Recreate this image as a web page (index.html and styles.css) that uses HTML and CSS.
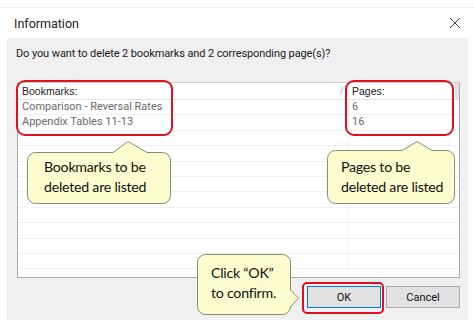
FILE: index.html
```html
<!DOCTYPE html>
<html>
<head>
<meta charset="utf-8">
<link rel="stylesheet" href="styles.css">
</head>
<body>
<div class="stage">
  <div class="topline"></div>
  <div class="titlebar">
    <span class="title">Information</span>
    <svg class="close" width="12" height="12" viewBox="0 0 12 12"><path d="M1 1 L11 11 M11 1 L1 11" stroke="#444" stroke-width="1" fill="none"/></svg>
  </div>
  <div class="content">
    <p class="question">Do you want to delete 2 bookmarks and 2 corresponding page(s)?</p>
    <div class="listbox">
      <div class="row header">
        <div class="cell c1">Bookmarks:<span class="grip">/</span></div>
        <div class="cell c2">Pages:</div>
        <div class="endbar"></div>
      </div>
      <div class="row"><div class="cell c1">Comparison - Reversal Rates</div><div class="cell c2">6</div></div>
      <div class="row"><div class="cell c1">Appendix Tables 11-13</div><div class="cell c2">16</div></div>
      <div class="row"><div class="cell c1"></div><div class="cell c2"></div></div>
      <div class="row"><div class="cell c1"></div><div class="cell c2"></div></div>
      <div class="row"><div class="cell c1"></div><div class="cell c2"></div></div>
      <div class="row"><div class="cell c1"></div><div class="cell c2"></div></div>
      <div class="row"><div class="cell c1"></div><div class="cell c2"></div></div>
      <div class="row"><div class="cell c1"></div><div class="cell c2"></div></div>
      <div class="row"><div class="cell c1"></div><div class="cell c2"></div></div>
      <div class="row"><div class="cell c1"></div><div class="cell c2"></div></div>
      <div class="row"><div class="cell c1"></div><div class="cell c2"></div></div>
    </div>
    <div class="buttons">
      <button class="btn btn-ok">OK</button>
      <button class="btn">Cancel</button>
    </div>
  </div>

  <div class="mark mark-bookmarks"></div>
  <div class="mark mark-pages"></div>
  <div class="mark mark-ok"></div>

  <div class="callout callout-bookmarks">
    <svg class="bubble" width="146" height="64" viewBox="0 0 146 64"><path d="M8.5 11.5 H86 L101 0.5 L120 11.5 H135.5 A8 8 0 0 1 143.5 19.5 V54.5 A8 8 0 0 1 135.5 62.5 H8.5 A8 8 0 0 1 0.5 54.5 V19.5 A8 8 0 0 1 8.5 11.5 Z" fill="#fdfccf" stroke="#8a8a78" stroke-width="1"/></svg>
    <div class="ctext">Bookmarks to be<br>deleted are listed</div>
  </div>
  <div class="callout callout-pages">
    <svg class="bubble" width="130" height="64" viewBox="0 0 130 64"><path d="M8.5 9.5 H75 L90 0.5 L105 9.5 H119.5 A8 8 0 0 1 127.5 17.5 V54.5 A8 8 0 0 1 119.5 62.5 H8.5 A8 8 0 0 1 0.5 54.5 V17.5 A8 8 0 0 1 8.5 9.5 Z" fill="#fdfccf" stroke="#8a8a78" stroke-width="1"/></svg>
    <div class="ctext">Pages to be<br>deleted are listed</div>
  </div>
  <div class="callout callout-ok">
    <svg class="bubble" width="103" height="62" viewBox="0 0 103 62"><path d="M8.5 0.5 H85.5 A8 8 0 0 1 93.5 8.5 V36 L101.5 44 L93.5 53 V52.5 A8 8 0 0 1 85.5 60.5 H8.5 A8 8 0 0 1 0.5 52.5 V8.5 A8 8 0 0 1 8.5 0.5 Z" fill="#fdfccf" stroke="#8a8a78" stroke-width="1"/></svg>
    <div class="ctext">Click “OK”<br>to confirm.</div>
  </div>
</div>
</body>
</html>
```

FILE: styles.css
```css
* { box-sizing: border-box; }
html, body { margin: 0; padding: 0; background: #fff; }
body { width: 474px; height: 325px; overflow: hidden; font-family: Roboto, "Noto Sans", sans-serif; color: #1a1a1a; }
.stage { position: relative; width: 474px; height: 325px; }

.topline { height: 8px; border-bottom: 1px solid #eeeeee; }
.titlebar { height: 30px; display: flex; align-items: center; justify-content: space-between; padding: 0 13px 0 14px; }
.title { font-size: 12.5px; color: #222; }
.close { display: block; }

.content { margin: 0 6px 0 7px; height: 282px; background: #f0f0f0; padding: 0 8px 0 10px; display: flex; flex-direction: column; }
.question { margin: 9px 0 0 -1px; font-size: 11px; letter-spacing: -0.1px; line-height: 14px; color: #1a1a1a; }

.listbox { margin-top: 21px; height: 196px; background: #fff; border: 1px solid #ababab; border-top-color: #d0d0d0; overflow: hidden; }
.row { display: flex; height: 15.4px; border-bottom: 1px solid #f0f0f0; font-size: 11px; line-height: 14px; color: #6a6a6a; }
.cell { padding-left: 4px; white-space: nowrap; }
.c1 { width: 331px; border-right: 1px solid #f3f3f3; position: relative; }
.c2 { flex: 1; padding-left: 3px; }
.header { height: 17px; border-bottom: 1px solid #e5e5e5; color: #222; font-family: "Liberation Sans", Arial, sans-serif; font-size: 10.5px; line-height: 16px; position: relative; }
.header .c1 { border-right: none; }
.grip { position: absolute; right: 6px; top: 0; color: #9aa; font-size: 9px; }
.endbar { width: 4px; background: #e3e3e3; }

.buttons { margin-top: 8px; display: flex; justify-content: flex-end; gap: 5px; padding-right: 0; }
.btn { width: 74px; height: 22px; background: #e1e1e1; border: 1px solid #adadad; font-family: Roboto, sans-serif; font-size: 11px; color: #111; padding: 0; }
.btn-ok { border-color: #0078d7; }

.mark { position: absolute; border: 2.5px solid #e01020; border-radius: 9px; }
.mark-bookmarks { left: 16px; top: 80px; width: 157px; height: 56px; }
.mark-pages { left: 345px; top: 80px; width: 109px; height: 56px; }
.mark-ok { left: 302px; top: 282px; width: 82px; height: 32px; border-radius: 5px; }

.callout { position: absolute; }
.bubble { position: absolute; left: 0; top: 0; display: block; }
.ctext { position: relative; font-family: "Lato", "Open Sans", sans-serif; font-size: 14.2px; letter-spacing: -0.25px; line-height: 20px; color: #111; white-space: nowrap; }
.callout-bookmarks { left: 27px; top: 141px; width: 146px; height: 64px; }
.callout-bookmarks .ctext { padding: 16px 0 0 17px; }
.callout-pages { left: 327px; top: 141px; width: 130px; height: 64px; }
.callout-pages .ctext { padding: 16px 0 0 14px; }
.callout-ok { left: 197px; top: 254px; width: 103px; height: 62px; }
.callout-ok .ctext { padding: 9px 0 0 14px; }
```
